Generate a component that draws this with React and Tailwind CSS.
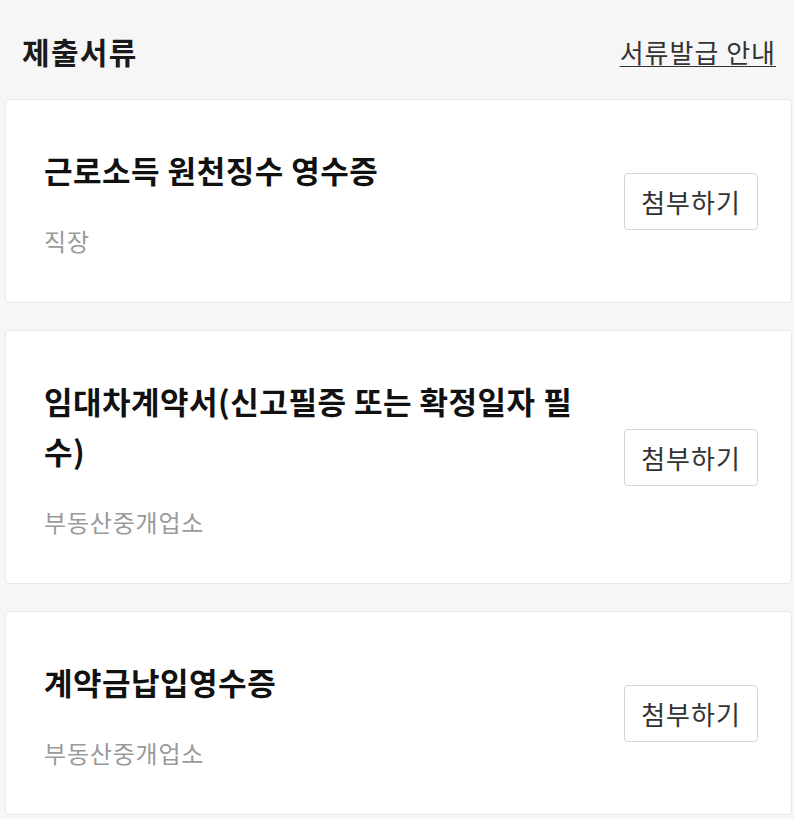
import React from 'react';

// Documents to submit
const documents = [
  { id: 1, title: '근로소득 원천징수 영수증', issuer: '직장' },
  { id: 2, title: '임대차계약서(신고필증 또는 확정일자 필수)', issuer: '부동산중개업소' },
  { id: 3, title: '계약금납입영수증', issuer: '부동산중개업소' },
];

const DocumentCard = ({ doc }) => {
  return (
    <div className="ml-[5px] mr-[2px] bg-white border border-[#e9e9e9] rounded-[4px] flex items-center pl-[38px] pr-[33px] pt-[45px] pb-[45px]">
      <div className="flex-1 min-w-0">
        <h3 className="max-w-[540px] break-all text-[31px] leading-[50px] font-bold text-[#111111] tracking-[0.5px]">
          {doc.title}
        </h3>
        <p className="mt-[30px] text-[24px] leading-[32px] text-[#9a9a9a] tracking-[0.8px]">
          {doc.issuer}
        </p>
      </div>
      <button
        type="button"
        className="shrink-0 w-[134px] h-[57px] bg-white border border-[#d6d6d6] rounded-[4px] text-[26px] text-[#333333] tracking-[1px]"
      >
        첨부하기
      </button>
    </div>
  );
};

const App = () => {
  return (
    <div
      className="min-h-screen bg-[#f6f6f6] pb-[10px]"
      style={{ fontFamily: '"Noto Sans CJK KR", "Noto Sans", sans-serif' }}
    >
      {/* Header */}
      <div className="flex items-center justify-between pl-[22px] pr-[18px] pt-[34px] pb-[30px]">
        <h2 className="text-[30px] leading-[35px] font-bold text-[#1a1a1a] tracking-[1.3px]">제출서류</h2>
        <a href="#" className="text-[26px] leading-[35px] text-[#333333] tracking-[1px] underline underline-offset-[3px] decoration-1">
          서류발급 안내
        </a>
      </div>

      {/* Document list */}
      <div className="flex flex-col gap-[27px]">
        {documents.map((doc) => (
          <DocumentCard key={doc.id} doc={doc} />
        ))}
      </div>
    </div>
  );
};

export default App;
